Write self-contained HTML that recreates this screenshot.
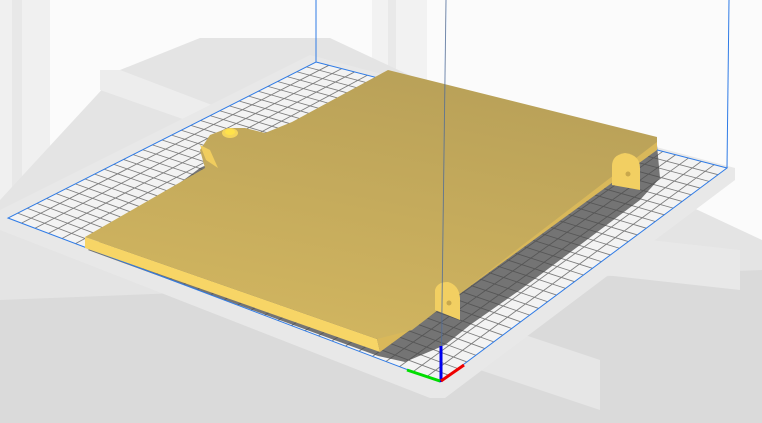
<!DOCTYPE html>
<html><head><style>
html,body{margin:0;padding:0;width:762px;height:423px;overflow:hidden;background:#fff}
svg{display:block}
</style></head><body>
<svg id="s" width="762" height="423" viewBox="0 0 762 423" xmlns="http://www.w3.org/2000/svg">
<defs>
<linearGradient id="tg" x1="0.7" y1="0" x2="0.3" y2="1">
<stop offset="0" stop-color="#b8a058"/>
<stop offset="1" stop-color="#d2b660"/>
</linearGradient>
</defs>
<rect width="762" height="423" fill="#fbfbfb"/>
<!-- vertical frame posts -->
<rect x="0" y="0" width="50" height="423" fill="#f0f0f0"/>
<rect x="12" y="0" width="10" height="423" fill="#e8e8e8"/>
<rect x="372" y="0" width="55" height="150" fill="#f2f2f2"/>
<rect x="388" y="0" width="8" height="150" fill="#e9e9e9"/>
<!-- back gray area -->
<polygon points="120,70 200,38 330,38 762,240 762,423 0,423 0,200" fill="#e4e4e4"/>
<polygon points="0,300 762,270 762,423 0,423" fill="#dadada"/>
<!-- rails -->
<polygon points="100,70 120,70 330,150 300,160 100,90" fill="#ededed"/>
<polygon points="560,230 740,250 740,290 560,270" fill="#e8e8e8"/>
<polygon points="480,320 600,360 600,410 480,370" fill="#e6e6e6"/>
<!-- bed base -->
<polygon points="310,55 735,168 735,180 445,398 430,398 0,230 0,210" fill="#e8e8e8"/>
<!-- grid plate -->
<polygon points="316,62 727,168 440,382 8,218" fill="#f3f3f3"/>
<g id="grid" stroke="#7e7e7e" stroke-width="0.9" fill="none"></g>
<!-- shadow -->
<polygon points="290,125 657,145 660,178 640,200 520,290 470,325 445,345 405,362 378,356 88,250 200,168" fill="#4a4a4a" opacity="0.75"/>
<polygon points="316,62 727,168 440,382 8,218" fill="none" stroke="#2f7be6" stroke-width="1"/>
<line x1="316" y1="0" x2="316" y2="62" stroke="#2f7be6" stroke-width="1"/>
<line x1="729" y1="0" x2="727" y2="168" stroke="#2f7be6" stroke-width="1"/>
<!-- plate sides -->
<polygon points="85,237 377,339 380,352 85,248" fill="#f7d566"/>
<polygon points="377,339 657,140 657,150 380,352" fill="#d9b85a"/>
<!-- top face -->
<polygon points="388,70 657,137 657,142 412,330 377,339 85,237 205,168 200,150 210,135 228,128 245,128 265,133 292,122" fill="url(#tg)"/>
<!-- tab -->
<polygon points="200,145 206,160 218,168 210,150" fill="#f0cd5e"/>
<ellipse cx="230" cy="133" rx="8" ry="5" fill="#f5d55a"/>
<ellipse cx="230" cy="132" rx="5" ry="3" fill="#ffe24a"/>
<!-- lugs -->
<path d="M612,185 L612,166 Q612,155 625,153 Q640,155 640,168 L640,190 Z" fill="#f2cf62"/>
<circle cx="628" cy="174" r="2.5" fill="#c9a84c"/>
<path d="M435,310 L435,290 Q437,282 448,282 Q459,285 460,298 L460,320 Z" fill="#f2cf62"/>
<circle cx="449" cy="303" r="2.5" fill="#c9a84c"/>
<!-- center line -->
<line x1="446" y1="0" x2="441" y2="382" stroke="#2f7be6" stroke-width="1" opacity="0.7"/>
<line x1="446" y1="0" x2="441" y2="382" stroke="#8a5a20" stroke-width="0.6" opacity="0.5"/>
<!-- axes -->
<line x1="441" y1="346" x2="441" y2="382" stroke="#0000ee" stroke-width="3"/>
<line x1="407" y1="370" x2="440" y2="381" stroke="#00dd00" stroke-width="3"/>
<line x1="441" y1="381" x2="464" y2="365" stroke="#ee0000" stroke-width="3"/>
</svg>
<script>
(function(){
var T=[316,62],R=[727,168],B=[440,382],L=[8,218],n=32;
function lerp(a,b,t){return [a[0]+(b[0]-a[0])*t,a[1]+(b[1]-a[1])*t];}
var g=document.getElementById('grid'),s='';
for(var i=1;i<n;i++){var t=i/n;
var a=lerp(T,R,t),b=lerp(L,B,t);s+='<line x1="'+a[0]+'" y1="'+a[1]+'" x2="'+b[0]+'" y2="'+b[1]+'"/>';
var c=lerp(T,L,t),d=lerp(R,B,t);s+='<line x1="'+c[0]+'" y1="'+c[1]+'" x2="'+d[0]+'" y2="'+d[1]+'"/>';}
g.innerHTML=s;
})();
</script>
</body></html>
